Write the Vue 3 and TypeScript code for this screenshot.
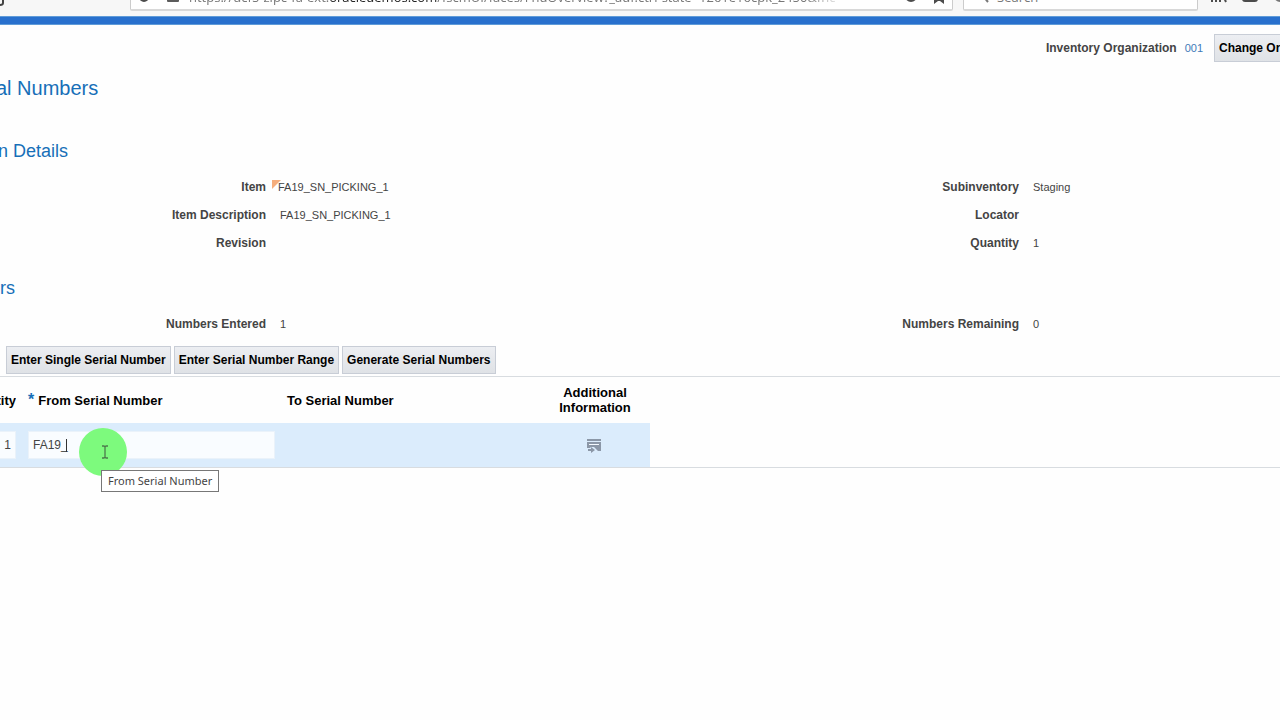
<script setup lang="ts">
import { ref } from 'vue'

interface Field {
  label: string
  value: string
  flagged?: boolean
}

const itemFields: Field[] = [
  { label: 'Item', value: 'FA19_SN_PICKING_1', flagged: true },
  { label: 'Subinventory', value: 'Staging' },
  { label: 'Item Description', value: 'FA19_SN_PICKING_1' },
  { label: 'Locator', value: '' },
  { label: 'Revision', value: '' },
  { label: 'Quantity', value: '1' },
]

const countFields: Field[] = [
  { label: 'Numbers Entered', value: '1' },
  { label: 'Numbers Remaining', value: '0' },
]

const actions: string[] = [
  'Enter Single Serial Number',
  'Enter Serial Number Range',
  'Generate Serial Numbers',
]

const quantity = ref('1')
const fromSerial = ref('FA19_')
</script>

<template>
  <div class="screen">
    <header class="browser">
      <div class="tab-edge">
        <svg width="6" height="10" viewBox="0 0 6 10"><path d="M3 0V3Q3 5 0 5" fill="none" stroke="#444" stroke-width="2" /></svg>
      </div>
      <div class="address">
        <svg class="shield" width="14" height="14" viewBox="0 0 14 14"><path d="M3 2V7A4 4 0 0 0 11 7V2" fill="none" stroke="#4c4c4c" stroke-width="2" /></svg>
        <svg class="lock" width="12" height="14" viewBox="0 0 12 14"><path d="M0 4H12V11Q12 12 11 12H1Q0 12 0 11Z" fill="#5c5c5c" /></svg>
        <span class="url">https://ucf5-zipc-fa-ext.<b>oracledemos.com</b>/fscmUI/faces/FndOverview?_adf.ctrl-state=1261e16cpk_2450&amp;fnc</span>
        <svg class="mark" width="14" height="14" viewBox="0 0 14 14"><circle cx="7" cy="6" r="5" fill="none" stroke="#4c4c4c" stroke-width="2" /></svg>
        <svg class="mark" width="14" height="14" viewBox="0 0 14 14"><path d="M3 1V12L7 9L11 12V1" fill="none" stroke="#4c4c4c" stroke-width="2" /></svg>
      </div>
      <div class="search">
        <svg width="12" height="14" viewBox="0 0 12 14"><path d="M4 6L9 12" fill="none" stroke="#777" stroke-width="2" /></svg>
        <span>Search</span>
      </div>
      <div class="tools">
        <svg width="16" height="14" viewBox="0 0 16 14"><path d="M1 0V12M5 0V12M9 0V12M11 3L15 12" fill="none" stroke="#4c4c4c" stroke-width="2" /></svg>
        <svg width="16" height="14" viewBox="0 0 16 14"><path d="M1 2V9Q1 11 3 11H13Q15 11 15 9V2M8 2V11M1 8H8" fill="none" stroke="#4c4c4c" stroke-width="2" /></svg>
        <svg width="14" height="14" viewBox="0 0 14 14"><circle cx="7" cy="6" r="5" fill="none" stroke="#777" stroke-width="2" /></svg>
      </div>
    </header>
    <div class="brand-bar"></div>

    <main>
      <div class="organization">
        <span class="label">Inventory Organization</span>
        <a href="#">001</a>
        <button type="button">Change Organization</button>
      </div>

      <h1>al Numbers</h1>

      <section>
        <h2>n Details</h2>
        <dl class="fields item-fields">
          <template v-for="field in itemFields" :key="field.label">
            <dt>{{ field.label }}</dt>
            <dd :class="{ flagged: field.flagged }">{{ field.value }}</dd>
          </template>
        </dl>
      </section>

      <section>
        <h2 class="numbers-heading">rs</h2>
        <dl class="fields count-fields">
          <template v-for="field in countFields" :key="field.label">
            <dt>{{ field.label }}</dt>
            <dd>{{ field.value }}</dd>
          </template>
        </dl>

        <div class="actions">
          <button v-for="action in actions" :key="action" type="button">{{ action }}</button>
        </div>

        <div class="grid">
          <table>
            <colgroup>
              <col class="col-quantity" />
              <col class="col-serial" />
              <col class="col-serial" />
              <col class="col-info" />
            </colgroup>
            <thead>
              <tr>
                <th scope="col"><span class="clip"><span>tity</span></span></th>
                <th scope="col"><span class="star">*</span>From Serial Number</th>
                <th scope="col">To Serial Number</th>
                <th scope="col" class="info">Additional Information</th>
              </tr>
            </thead>
            <tbody>
              <tr>
                <td><input v-model="quantity" class="quantity" type="text" aria-label="Quantity" /></td>
                <td class="from">
                  <input v-model="fromSerial" type="text" aria-label="From Serial Number" />
                  <span class="caret"></span>
                  <span class="pointer">
                    <svg width="8" height="14" viewBox="0 0 8 14"><path d="M1 1H3L4 2L5 1H7M4 2V12M1 13H3L4 12L5 13H7" fill="none" stroke="#4d7a4d" stroke-width="1.3" /></svg>
                  </span>
                  <span class="tooltip" role="tooltip">From Serial Number</span>
                </td>
                <td></td>
                <td class="info">
                  <button type="button" class="icon-button" aria-label="Additional Information">
                    <svg width="14" height="14" viewBox="0 0 14 14">
                      <path d="M0 0H14V2H0Z" fill="#8b97a7" />
                      <path d="M0 3H14V12H11L8 9L7 8H4L3 9H0Z" fill="#8b97a7" />
                      <path d="M2 5H12V6H2Z" fill="#f4f9fe" />
                      <path d="M1 10H4V8L8 11L4 14V12H1Z" fill="#8b97a7" />
                    </svg>
                  </button>
                </td>
              </tr>
            </tbody>
          </table>
        </div>
      </section>
    </main>
  </div>
</template>

<style>
body {
  margin: 0;
  background: #fff;
}
</style>

<style scoped>
* {
  box-sizing: border-box;
}

.screen {
  min-height: 100vh;
  overflow: hidden;
  background: #fefefe;
  color: #444;
  font-family: "Liberation Sans", Arial, sans-serif;
  font-size: 12px;
  line-height: 16px;
}

.browser {
  display: flex;
  align-items: flex-end;
  height: 16px;
  padding-bottom: 5px;
  overflow: hidden;
  background: #f7f7f7;
  color: #777;
  font-family: "Open Sans", "Noto Sans", sans-serif;
  font-size: 13px;
}

.browser svg {
  flex: none;
}

.tab-edge {
  flex: none;
  width: 130px;
  height: 11px;
}

.tab-edge svg {
  display: block;
}

.address,
.search {
  display: flex;
  align-items: center;
  height: 28px;
  border: 1px solid #ccc;
  border-bottom: 2px solid #d8d8d8;
  border-radius: 2px;
  background: #fff;
}

.address {
  flex: 1;
  min-width: 0;
  padding: 0 6px;
}

.lock {
  margin: 0 10px 0 16px;
}

.url {
  flex: 1;
  min-width: 0;
  margin-right: 60px;
  overflow: hidden;
  white-space: nowrap;
  mask-image: linear-gradient(to right, #000 94%, transparent);
}

.url b {
  color: #222;
  font-weight: 400;
}

.mark + .mark {
  margin-left: 14px;
}

.search {
  width: 235px;
  margin-left: 10px;
  padding-left: 15px;
  gap: 6px;
}

.tools {
  display: flex;
  align-items: center;
  gap: 15px;
  width: 82px;
  height: 28px;
  padding-left: 13px;
}

.brand-bar {
  height: 9px;
  border: solid #5f9bd8;
  border-width: 1px 0;
  background: #2870cd;
}

.organization {
  display: flex;
  justify-content: flex-end;
  align-items: center;
  gap: 8px;
  height: 46px;
  margin-right: -64px;
}

.organization .label {
  font-weight: 700;
}

.organization a {
  color: #3f7bb8;
  font-size: 11px;
  text-decoration: none;
}

.organization button {
  width: 130px;
  margin-left: 3px;
  text-align: left;
}

button {
  height: 28px;
  padding: 0 4px;
  border: 1px solid #c8cdd6;
  background: linear-gradient(#eceef2, #dfe2e6);
  color: #000;
  font: 700 12px/16px "Liberation Sans", Arial, sans-serif;
  white-space: nowrap;
}

h1,
h2 {
  margin: 0;
  color: #176fb8;
  font-weight: 400;
}

h1 {
  margin-top: 5px;
  margin-left: -4px;
  font-size: 20px;
  line-height: 24px;
}

h2 {
  margin-left: -2px;
  font-size: 18px;
  line-height: 24px;
}

section:first-of-type h2 {
  margin-top: 39px;
}

.numbers-heading {
  margin-left: 0;
}

.fields {
  display: grid;
  grid-template-columns: 266px minmax(0, 1fr) auto 247px;
  column-gap: 14px;
  margin: 0;
}

.fields dt,
.fields dd {
  height: 28px;
  margin: 0;
  line-height: 28px;
}

.fields dt {
  font-weight: 700;
  text-align: right;
}

.fields dd {
  font-size: 11px;
}

.item-fields {
  padding: 10px 0 19px;
}

.count-fields {
  padding: 10px 0 8px;
}

.fields .flagged {
  position: relative;
  margin-left: -2px;
}

.flagged::before {
  position: absolute;
  top: 7px;
  left: -6px;
  border-top: 9px solid #f5ad7c;
  border-right: 9px solid transparent;
  content: "";
}

.actions {
  display: flex;
  gap: 3px;
  padding: 0 6px 2px;
}

.grid {
  border: solid #d8dce0;
  border-width: 1px 0;
}

table {
  width: 650px;
  border-collapse: collapse;
  table-layout: fixed;
}

.col-quantity {
  width: 22px;
}

.col-serial {
  width: 259px;
}

th {
  height: 46px;
  padding: 0 6px;
  color: #000;
  font-size: 13px;
  line-height: 15px;
  text-align: left;
}

th:first-child,
td:first-child {
  padding-left: 0;
}

.clip {
  display: flex;
  justify-content: flex-end;
  overflow: hidden;
}

.star {
  margin-right: 4px;
  color: #176fb8;
  font-size: 16px;
}

td {
  height: 44px;
  padding: 0 6px;
  background: #dbecfc;
}

th.info,
td.info {
  padding: 0 14px;
  text-align: center;
}

td.info {
  padding-top: 2px;
  padding-right: 16px;
}

input {
  display: block;
  width: 100%;
  height: 28px;
  padding: 0 4px;
  border: 1px solid #eaf2fa;
  border-radius: 0;
  background: #f9fcff;
  color: #444;
  font: 12px/16px "Liberation Sans", Arial, sans-serif;
}

.quantity {
  padding-left: 0;
  border-left: 0;
  text-align: right;
}

.from {
  position: relative;
}

.caret {
  position: absolute;
  top: 16px;
  left: 44px;
  width: 1px;
  height: 13px;
  background: #333;
}

.pointer {
  position: absolute;
  top: 5px;
  left: 57px;
  display: flex;
  justify-content: center;
  align-items: center;
  width: 48px;
  height: 48px;
  padding-left: 3px;
  border-radius: 50%;
  background: #7dfa7d;
  pointer-events: none;
}

.tooltip {
  position: absolute;
  top: 47px;
  left: 79px;
  padding: 1px 6px;
  border: 1px solid #777;
  background: #fff;
  color: #444;
  font: 11px/18px "Noto Sans", "Open Sans", sans-serif;
  white-space: nowrap;
}

.icon-button {
  display: block;
  width: 14px;
  height: 14px;
  margin: 0 auto;
  padding: 0;
  border: 0;
  background: none;
}

.icon-button svg {
  display: block;
}
</style>
